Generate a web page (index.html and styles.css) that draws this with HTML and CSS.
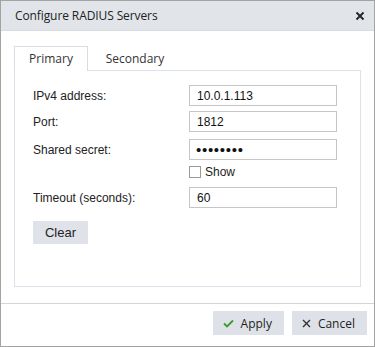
FILE: index.html
```html
<!DOCTYPE html>
<html>
<head>
<meta charset="utf-8">
<link rel="stylesheet" href="styles.css">
</head>
<body>
<div class="dialog">
  <div class="header">
    <span class="title">Configure RADIUS Servers</span>
    <svg class="close" width="10" height="10" viewBox="0 0 10 10"><path d="M1.5 1.5 L8.5 8.5 M8.5 1.5 L1.5 8.5" stroke="#222" stroke-width="1.8" fill="none"/></svg>
  </div>
  <div class="content">
    <div class="tabs">
      <div class="tab active">Primary</div>
      <div class="tab">Secondary</div>
    </div>
    <div class="panel">
      <div class="row r1">
        <label class="lbl">IPv4 address:</label>
        <div class="input">10.0.1.113</div>
      </div>
      <div class="row r2">
        <label class="lbl">Port:</label>
        <div class="input">1812</div>
      </div>
      <div class="row r3">
        <label class="lbl">Shared secret:</label>
        <div class="input dots">••••••••</div>
      </div>
      <div class="showrow">
        <span class="check"></span><span class="showtxt">Show</span>
      </div>
      <div class="row r4">
        <label class="lbl">Timeout (seconds):</label>
        <div class="input">60</div>
      </div>
      <div class="clear-btn">Clear</div>
    </div>
  </div>
  <div class="footer">
    <div class="btn">
      <svg width="11" height="9" viewBox="0 0 11 9"><path d="M1 4.5 L4 7.5 L10 1.5" stroke="#3a9a2a" stroke-width="1.8" fill="none"/></svg>
      <span>Apply</span>
    </div>
    <div class="btn">
      <svg width="9" height="9" viewBox="0 0 9 9"><path d="M1 1 L8 8 M8 1 L1 8" stroke="#333" stroke-width="1.4" fill="none"/></svg>
      <span>Cancel</span>
    </div>
  </div>
</div>
</body>
</html>
```

FILE: styles.css
```css
* { box-sizing: border-box; }
html, body { margin: 0; padding: 0; background: #fff; }
.dialog {
  width: 375px;
  height: 347px;
  border: 1px solid #a3a3a3;
  display: flex;
  flex-direction: column;
  background: #fff;
}
.header {
  height: 30px;
  background: #e1e5ea;
  display: flex;
  align-items: center;
  justify-content: space-between;
  padding: 0 9px 0 14px;
  border-bottom: 1px solid #d8dce1;
}
.title {
  font-family: "Open Sans", sans-serif;
  font-size: 12px;
  color: #222;
  letter-spacing: -0.1px;
}
.close { display: block; }
.content {
  flex: 1;
  padding: 15px 13px 16px 13px;
  display: flex;
  flex-direction: column;
}
.tabs {
  display: flex;
  height: 24px;
}
.tab {
  font-family: "Open Sans", sans-serif;
  font-size: 12px;
  color: #333;
  display: flex;
  align-items: center;
  justify-content: center;
  width: 74px;
  height: 25px;
  padding-bottom: 1px;
}
.tab.active {
  border: 1px solid #d6dde5;
  border-bottom: none;
  background: #fff;
  position: relative;
  z-index: 1;
}
.tab:not(.active) { width: 94px; }
.panel {
  flex: 1;
  border: 1px solid #dbe2ea;
  padding: 14px 18px 0 18px;
  font-family: "Liberation Sans", Arial, sans-serif;
  font-size: 12px;
  color: #222;
}
.row {
  display: flex;
  align-items: center;
  height: 21px;
}
.r2 { margin-top: 5px; }
.r3 { margin-top: 7px; }
.r4 { margin-top: 9px; }
.lbl { width: 156px; }
.input {
  width: 148px;
  height: 21px;
  border: 1px solid #c6c6c6;
  padding: 0 7px;
  display: flex;
  align-items: center;
  font-size: 12px;
  color: #111;
}
.dots { font-size: 15px; letter-spacing: 0.7px; padding-left: 6px; }
.showrow {
  display: flex;
  align-items: center;
  margin-top: 5px;
  padding-left: 156px;
  height: 13px;
}
.check {
  width: 12px;
  height: 12px;
  border: 1px solid #9a9a9a;
  background: #fff;
  margin-right: 4px;
}
.showtxt { font-size: 12px; color: #222; }
.clear-btn {
  margin-top: 13px;
  width: 55px;
  height: 23px;
  background: #dfe3e9;
  display: flex;
  align-items: center;
  justify-content: center;
  font-size: 13px;
  color: #222;
}
.footer {
  height: 43px;
  border-top: 1px solid #d4d4d4;
  display: flex;
  justify-content: flex-end;
  align-items: flex-start;
  padding: 7px 7px 0 0;
  gap: 8px;
}
.btn {
  height: 24px;
  background: #dee2e8;
  display: flex;
  align-items: center;
  gap: 7px;
  padding: 0 12px 0 10px;
  font-family: "Open Sans", sans-serif;
  font-size: 12px;
  color: #222;
}
.btn svg { display: block; }
```
